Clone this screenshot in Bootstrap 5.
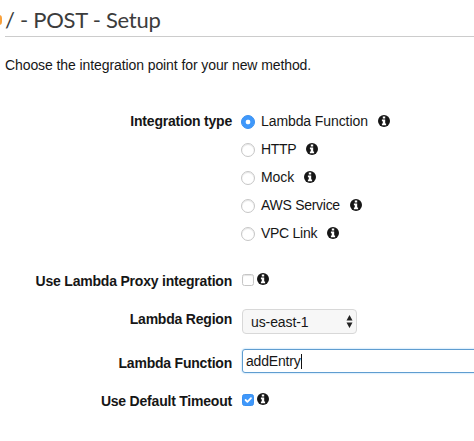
<!DOCTYPE html>
<html lang="en">
<head>
<meta charset="utf-8">
<meta name="viewport" content="width=device-width, initial-scale=1">
<title>POST - Setup</title>
<link href="https://cdn.jsdelivr.net/npm/bootstrap@5.3.0/dist/css/bootstrap.min.css" rel="stylesheet">
<style>
body{font:14px/20px "Liberation Sans",Arial,sans-serif;letter-spacing:-.09px;color:#161616;background:#fff;width:474px;height:441px}
.setup-head{height:37px;margin-left:5px;border-bottom:1px solid #ccc}
.setup-head h1{font:400 22px/40px "Lato",sans-serif;letter-spacing:-.27px;color:#3c3c3c;white-space:pre}
.method-dot{left:-6px;top:15px;width:8px;height:10px;border-radius:3px;background:#f9a13c}
.intro{margin:18px 0 32px 5px}
.field-row{height:28px}
.field-label{width:232px;flex:none;font-weight:700;letter-spacing:-.21px;text-align:right;white-space:nowrap}
.field-body{margin-left:9px}
.choice .form-check-input{width:14px;height:14px;margin:1px 6px 0 0;border:1px solid #c6c6c6;box-shadow:inset 0 1px 1px #e4e4e4;background-color:#fff}
.choice .form-check-input:checked{border-color:#3b91f0;background-color:#3f98fb;box-shadow:none}
.choice .form-check-input[type=radio]:checked{background-image:radial-gradient(circle,#fff 2px,transparent 2.7px)}
.choice .form-check-input[type=checkbox]{width:12px;height:12px;margin:1px 3px 0 1px;border-radius:2.5px}
.choice .form-check-input[type=checkbox]:checked{background-size:12px}
.info{width:12px;height:12px;flex:none}
.choice label + .info{margin-left:10px}
.choice .tight{letter-spacing:-.28px}
.flag{padding-top:6px}
.proxy-row{margin-top:20px}
.region-row{margin-top:14px}
.region{width:115px;height:25px;border:1px solid #d8d8d8;border-radius:4px;background:#f7f7f7;padding:0 3px 0 8px;margin-left:10px}
.fn-row{margin-top:15px}
.fn-input{width:250px;height:24px;flex:none;margin-left:10px;border:1px solid #5f9dd0;border-radius:3px;box-shadow:0 0 2px #8cc9f5;padding:0 3px;letter-spacing:-.18px}
.timeout-row{margin-top:14px}
.caret{width:1px;height:15px;background:#111}
</style>
<script src="https://cdn.jsdelivr.net/npm/bootstrap@5.3.0/dist/js/bootstrap.bundle.min.js"></script>
</head>
<body class="overflow-hidden position-relative">
<svg class="d-none"><symbol id="info" viewBox="0 0 12 12"><circle cx="6" cy="6" r="6" fill="#161616"/><path d="M4.8 1.6h2.4v2H4.8zM3.9 4.6h3.3v3.9h.9v1.7H3.9V8.5h.9V6.2h-.9z" fill="#fff"/></symbol></svg>
<span class="method-dot position-absolute"></span>
<header class="setup-head"><h1 class="m-0">/ - POST - Setup</h1></header>
<p class="intro">Choose the integration point for your new method.</p>
<form>
<div class="d-flex">
 <div class="field-label pt-1">Integration type</div>
 <div class="field-body">
  <div class="choice field-row d-flex align-items-center"><input class="form-check-input" type="radio" name="kind" id="k1" checked><label for="k1">Lambda Function</label><svg class="info"><use href="#info"/></svg></div>
  <div class="choice field-row d-flex align-items-center"><input class="form-check-input" type="radio" name="kind" id="k2"><label class="tight" for="k2">HTTP</label><svg class="info"><use href="#info"/></svg></div>
  <div class="choice field-row d-flex align-items-center"><input class="form-check-input" type="radio" name="kind" id="k3"><label for="k3">Mock</label><svg class="info"><use href="#info"/></svg></div>
  <div class="choice field-row d-flex align-items-center"><input class="form-check-input" type="radio" name="kind" id="k4"><label class="tight" for="k4">AWS Service</label><svg class="info"><use href="#info"/></svg></div>
  <div class="choice field-row d-flex align-items-center"><input class="form-check-input" type="radio" name="kind" id="k5"><label class="tight" for="k5">VPC Link</label><svg class="info"><use href="#info"/></svg></div>
 </div>
</div>
<div class="proxy-row field-row d-flex align-items-start">
 <label class="field-label pt-1" for="proxy">Use Lambda Proxy integration</label>
 <div class="field-body choice flag d-flex align-items-start"><input class="form-check-input" type="checkbox" id="proxy"><svg class="info"><use href="#info"/></svg></div>
</div>
<div class="region-row d-flex">
 <div class="field-label">Lambda Region</div>
 <div class="region d-flex align-items-center justify-content-between"><span>us-east-1</span><svg width="7" height="13" viewBox="0 0 7 13"><path d="M3.5 0 6.5 5.5h-6zM3.5 13l-3-5.5h6z" fill="#222"/></svg></div>
</div>
<div class="fn-row d-flex align-items-center">
 <div class="field-label pt-1">Lambda Function</div>
 <div class="fn-input d-flex align-items-center"><span>addEntry</span><span class="caret"></span></div>
</div>
<div class="timeout-row field-row d-flex align-items-start">
 <label class="field-label pt-1" for="timeout">Use Default Timeout</label>
 <div class="field-body choice flag d-flex align-items-start"><input class="form-check-input" type="checkbox" id="timeout" checked><svg class="info"><use href="#info"/></svg></div>
</div>
</form>
</body>
</html>
